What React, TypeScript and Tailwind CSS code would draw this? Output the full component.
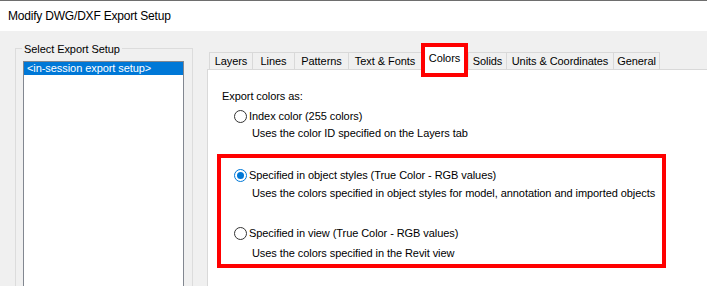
const font = { fontFamily: '"Liberation Sans", Arial, sans-serif' };

type RadioProps = { checked?: boolean; label: string };

const Radio: React.FC<RadioProps> = ({ checked, label }) => (
  <div className="flex h-[13px] items-center leading-[13px]">
    {checked ? (
      <span className="flex h-[13px] w-[13px] items-center justify-center rounded-full border border-[#0078d7] bg-white">
        <span className="h-[7px] w-[7px] rounded-full bg-[#0078d7]" />
      </span>
    ) : (
      <span className="h-[13px] w-[13px] rounded-full border border-[#333333] bg-white" />
    )}
    <span className="ml-[2px]">{label}</span>
  </div>
);

const tabs = [
  { name: 'Layers', w: 'w-[43px]' },
  { name: 'Lines', w: 'w-[42px]' },
  { name: 'Patterns', w: 'w-[54px]' },
  { name: 'Text & Fonts', w: 'w-[73px]' },
  { name: 'Colors', w: 'w-[47px]', active: true },
  { name: 'Solids', w: 'w-[38px]' },
  { name: 'Units & Coordinates', w: 'w-[107px]' },
  { name: 'General', w: 'w-[47px] border-r' },
];

export default function App() {
  return (
    <div
      className="flex h-[286px] w-[707px] flex-col overflow-hidden border-t border-[#6e6e6e] bg-[#f0f0f0] text-[11px] tracking-[-0.07px] text-black"
      style={font}
    >
      {/* title bar */}
      <div className="h-[30px] shrink-0 bg-white pl-2 pt-[8px] text-[12px] leading-[15px] tracking-[-0.2px]">
        Modify DWG/DXF Export Setup
      </div>

      <div className="flex flex-1 pl-[15px]">
        {/* Select Export Setup group */}
        <div className="relative mt-[17px] flex w-[178px] shrink-0 flex-col border border-b-0 border-[#dcdcdc] pl-[7px] pr-[8px]">
          <span className="absolute -top-[6px] left-[6px] bg-[#f0f0f0] px-[2px] leading-[13px]">
            Select Export Setup
          </span>
          <div className="mt-[12px] flex-1 border border-b-0 border-[#828790] bg-white">
            <div className="h-[13px] bg-[#0078d7] pl-[3px] leading-[13px] text-white">
              &lt;in-session export setup&gt;
            </div>
          </div>
        </div>

        {/* tab control */}
        <div className="ml-[14px] mt-[21px] flex flex-1 flex-col">
          <div className="flex h-[17px] pl-[2px]">
            {tabs.map((t) =>
              t.active ? (
                <div key={t.name} className={`relative ${t.w} shrink-0`}>
                  <div className="absolute -bottom-[8px] -top-[9px] left-0 right-0 border-4 border-[#ff0000] bg-white pt-[5px] text-center leading-[13px]">
                    {t.name}
                  </div>
                </div>
              ) : (
                <div
                  key={t.name}
                  className={`${t.w} shrink-0 border-l border-t border-[#d9d9d9] bg-[#f0f0f0] pt-[2px] text-center leading-[13px]`}
                >
                  {t.name}
                </div>
              ),
            )}
          </div>

          <div className="flex-1 border-l border-t border-[#d9d9d9] bg-white pl-[14px] pt-[20px]">
            <div className="leading-[13px]">Export colors as:</div>

            <div className="ml-[12px] mt-[7px]">
              <Radio label="Index color (255 colors)" />
            </div>
            <div className="ml-[30px] mt-[4px] leading-[13px]">Uses the color ID specified on the Layers tab</div>

            <div className="-ml-[5px] mt-[14px] w-[449px] border-4 border-[#ff0000] pb-[4px] pl-[13px] pt-[11px]">
              <Radio checked label="Specified in object styles (True Color - RGB values)" />
              <div className="ml-[18px] mt-[5px] leading-[13px]">
                Uses the colors specified in object styles for model, annotation and imported objects
              </div>
              <div className="mt-[27px]">
                <Radio label="Specified in view (True Color - RGB values)" />
              </div>
              <div className="ml-[18px] mt-[7px] leading-[13px]">Uses the colors specified in the Revit view</div>
            </div>
          </div>
        </div>
      </div>
    </div>
  );
}
